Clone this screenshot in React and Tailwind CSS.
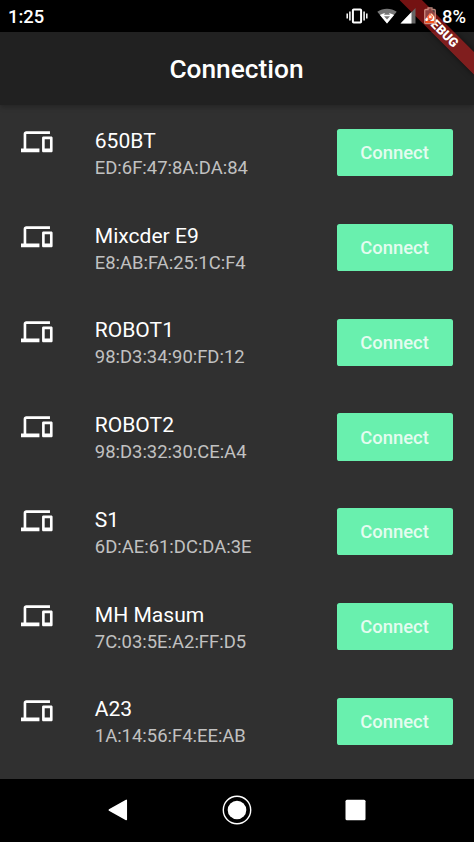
import { MdDevices } from "react-icons/md";

const devices = [
  { name: "650BT", address: "ED:6F:47:8A:DA:84" },
  { name: "Mixcder E9", address: "E8:AB:FA:25:1C:F4" },
  { name: "ROBOT1", address: "98:D3:34:90:FD:12" },
  { name: "ROBOT2", address: "98:D3:32:30:CE:A4" },
  { name: "S1", address: "6D:AE:61:DC:DA:3E" },
  { name: "MH Masum", address: "7C:03:5E:A2:FF:D5" },
  { name: "A23", address: "1A:14:56:F4:EE:AB" },
];

function StatusBar() {
  return (
    <div className="relative z-30 flex h-[31.6px] shrink-0 items-center justify-between px-2 text-white">
      <span className="pt-0.5 text-[18.4px] font-medium leading-none">1:25</span>
      <div className="flex items-center">
        {/* vibrate */}
        <svg width="22" height="18" viewBox="0 0 22 18" className="mr-[9px]">
          <rect x="6.9" y="2.4" width="8.2" height="13.2" rx="0.8" fill="none" stroke="#fff" strokeWidth="2" />
          <path d="M1.2 6.5v5M3.9 4.5v9M18.1 4.5v9M20.8 6.5v5" stroke="#fff" strokeWidth="1.5" />
        </svg>
        {/* wifi */}
        <svg width="20" height="18" viewBox="0 0 20 18" className="mr-[3px]">
          <path d="M0.3 4.7C6 0.7 14 0.7 19.7 4.7L10 16.500z" fill="#777" />
          <path d="M2.9 7.9C7 5.2 13 5.2 17.1 7.9L10 16.500z" fill="#fff" />
          <path d="M10 3.5L13 7.7H7zM7 9.3h6L10 12.5z" fill="#777" />
        </svg>
        {/* signal */}
        <svg width="16" height="18" viewBox="0 0 16 18" className="mr-[8px]">
          <path d="M15.5 1v15.5H0.5z" fill="#666" />
          <path d="M11.5 5v11.5H0.5z" fill="#fff" />
        </svg>
        {/* battery */}
        <svg width="12" height="18" viewBox="0 0 12 18" className="mr-[6px]">
          <path
            d="M4 0.8h4v1.7h2.3q1 0 1 1v12.2q0 1-1 1H1.7q-1 0-1-1V3.5q0-1 1-1H4z"
            fill="#fff"
            fillOpacity="0.2"
            stroke="#d8988a"
            strokeOpacity="0.85"
            strokeWidth="1.3"
          />
          <path d="M5.8 6L9.2 9.500L8 12.5L4.5 13L2.8 10z" fill="#ff7043" />
          <path d="M5 8.5h2.5v2.5H5z" fill="#ffe0d6" />
          <path d="M1.5 14h9v2h-9z" fill="#f4511e" />
        </svg>
        <span className="pt-0.5 text-[18.4px] font-medium leading-none">8%</span>
      </div>
    </div>
  );
}

function DebugBanner() {
  return (
    <div className="pointer-events-none absolute right-0 top-0 z-20 size-[80px] overflow-hidden">
      <div className="absolute left-[-4.4px] top-[23.8px] flex h-[15.8px] w-[105.4px] rotate-45 items-center justify-center bg-[#b71c1c]/63 shadow-[0_0_6px_rgba(0,0,0,0.5)]">
        <span className="mr-[3px] text-[12.8px] font-black leading-none text-white">DEBUG</span>
      </div>
    </div>
  );
}

function DeviceRow({ device }) {
  return (
    <li className="flex h-[94.77px] items-center px-[21px]">
      <MdDevices className="mt-[21px] size-[31.6px] shrink-0 self-start text-white" />
      <div className="ml-[42.2px] flex-1 whitespace-nowrap pt-[2.4px]">
        <p className="text-[21.07px] leading-[27px] text-white">{device.name}</p>
        <p className="text-[18.43px] leading-[27px] text-[#c1c1c1]">{device.address}</p>
      </div>
      <button className="h-[47.4px] w-[116px] shrink-0 rounded-[2.6px] bg-[#69f0ae] pr-px pt-px text-[18.43px] font-medium text-[#e4fcf0]">
        Connect
      </button>
    </li>
  );
}

function NavBar() {
  return (
    <div className="flex h-[63.2px] shrink-0 items-center justify-center gap-[88px] bg-black">
      <svg width="30" height="30" viewBox="0 0 30 30">
        <path d="M22.3 5.4v19.2L5.300 15z" fill="#fff" stroke="#fff" strokeWidth="1.5" strokeLinejoin="round" />
      </svg>
      <svg width="30" height="30" viewBox="0 0 30 30">
        <circle cx="15" cy="15" r="13.7" fill="none" stroke="#fff" strokeWidth="1.4" />
        <circle cx="15" cy="15" r="9.3" fill="#fff" />
      </svg>
      <svg width="30" height="30" viewBox="0 0 30 30">
        <rect x="5.5" y="4.8" width="20" height="20.4" rx="1.5" fill="#fff" />
      </svg>
    </div>
  );
}

export default function App() {
  return (
    <div className="relative flex h-[842px] w-[474px] flex-col overflow-hidden bg-black font-['Roboto',sans-serif]">
      <StatusBar />
      <header className="z-10 flex h-[73.7px] shrink-0 items-center justify-center bg-[#212121] pr-[1px] pt-[2px] shadow-[0_2px_5px_rgba(0,0,0,0.25)]">
        <h1 className="text-[26.3px] font-medium text-white">Connection</h1>
      </header>
      <ul className="min-h-0 flex-1 bg-[#303030]">
        {devices.map((device) => (
          <DeviceRow key={device.address} device={device} />
        ))}
      </ul>
      <NavBar />
      <DebugBanner />
    </div>
  );
}
